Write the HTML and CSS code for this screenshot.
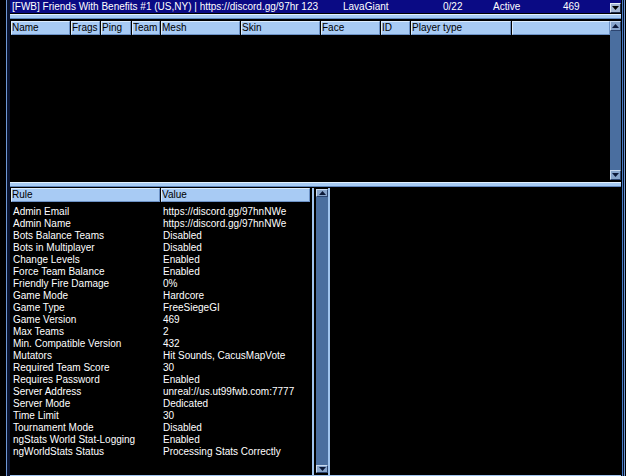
FILE: index.html
```html
<!DOCTYPE html>
<html>
<head>
<meta charset="utf-8">
<link rel="stylesheet" href="styles.css">
</head>
<body>
<div class="frame">
  <div class="edge-l"></div>
  <div class="main">
    <div class="srv">
      <div class="srv-cols">
        <span class="s-name">[FWB] Friends With Benefits #1 (US,NY) | https://discord.gg/97hr 123</span>
        <span class="s-map">LavaGiant</span>
        <span class="s-pl">0/22</span>
        <span class="s-st">Active</span>
        <span class="s-ver">469</span>
      </div>
      <div class="srv-sb">
        <div class="sbtn dark"><svg width="7" height="4" viewBox="0 0 7 4"><path d="M0 0H7L3.5 4Z" fill="#000"/></svg></div>
      </div>
    </div>
    <div class="split s1"></div>
    <div class="players">
      <div class="plist">
        <div class="hdr">
          <div class="hc w-name">Name</div>
          <div class="hc w-frags">Frags</div>
          <div class="hc w-ping">Ping</div>
          <div class="hc w-team">Team</div>
          <div class="hc w-mesh">Mesh</div>
          <div class="hc w-skin">Skin</div>
          <div class="hc w-face">Face</div>
          <div class="hc w-id">ID</div>
          <div class="hc w-ptype">Player type</div>
          <div class="hc w-rest"></div>
        </div>
      </div>
      <div class="vsb">
        <div class="sbtn"><svg width="7" height="4" viewBox="0 0 7 4"><path d="M0 4H7L3.5 0Z" fill="#0b1838"/></svg></div>
        <div class="track"></div>
        <div class="sbtn"><svg width="7" height="4" viewBox="0 0 7 4"><path d="M0 0H7L3.5 4Z" fill="#0b1838"/></svg></div>
      </div>
    </div>
    <div class="split s2"></div>
    <div class="lower">
      <div class="rules">
        <div class="rlist">
          <div class="hdr">
            <div class="hc w-rule">Rule</div>
            <div class="hc w-value">Value</div>
          </div>
          <div class="rows">
            <div class="row"><span class="k">Admin Email</span><span class="v">https://discord.gg/97hnNWe</span></div>
            <div class="row"><span class="k">Admin Name</span><span class="v">https://discord.gg/97hnNWe</span></div>
            <div class="row"><span class="k">Bots Balance Teams</span><span class="v">Disabled</span></div>
            <div class="row"><span class="k">Bots in Multiplayer</span><span class="v">Disabled</span></div>
            <div class="row"><span class="k">Change Levels</span><span class="v">Enabled</span></div>
            <div class="row"><span class="k">Force Team Balance</span><span class="v">Enabled</span></div>
            <div class="row"><span class="k">Friendly Fire Damage</span><span class="v">0%</span></div>
            <div class="row"><span class="k">Game Mode</span><span class="v">Hardcore</span></div>
            <div class="row"><span class="k">Game Type</span><span class="v">FreeSiegeGI</span></div>
            <div class="row"><span class="k">Game Version</span><span class="v">469</span></div>
            <div class="row"><span class="k">Max Teams</span><span class="v">2</span></div>
            <div class="row"><span class="k">Min. Compatible Version</span><span class="v">432</span></div>
            <div class="row"><span class="k">Mutators</span><span class="v">Hit Sounds, CacusMapVote</span></div>
            <div class="row"><span class="k">Required Team Score</span><span class="v">30</span></div>
            <div class="row"><span class="k">Requires Password</span><span class="v">Enabled</span></div>
            <div class="row"><span class="k">Server Address</span><span class="v">unreal://us.ut99fwb.com:7777</span></div>
            <div class="row"><span class="k">Server Mode</span><span class="v">Dedicated</span></div>
            <div class="row"><span class="k">Time Limit</span><span class="v">30</span></div>
            <div class="row"><span class="k">Tournament Mode</span><span class="v">Disabled</span></div>
            <div class="row"><span class="k">ngStats World Stat-Logging</span><span class="v">Enabled</span></div>
            <div class="row"><span class="k">ngWorldStats Status</span><span class="v">Processing Stats Correctly</span></div>
          </div>
        </div>
        <div class="vline"></div>
        <div class="vsb2">
          <div class="sbtn small"><svg width="7" height="4" viewBox="0 0 7 4"><path d="M0 4H7L3.5 0Z" fill="#0b1838"/></svg></div>
          <div class="track"></div>
          <div class="sbtn small"><svg width="7" height="4" viewBox="0 0 7 4"><path d="M0 0H7L3.5 4Z" fill="#0b1838"/></svg></div>
        </div>
        <div class="vline r"></div>
      </div>
      <div class="blank"></div>
    </div>
    <div class="bline"></div>
  </div>
  <div class="edge-r"></div>
</div>
</body>
</html>
```

FILE: styles.css
```css
* { box-sizing: border-box; }
html, body { margin: 0; padding: 0; background: #000; }
body {
  width: 626px;
  height: 476px;
  overflow: hidden;
  font-family: "Liberation Sans", Arial, sans-serif;
  font-size: 10px;
  color: #fff;
}
.frame { display: flex; height: 476px; }
.edge-l {
  width: 10px;
  background: linear-gradient(to right, #000 0 6px, #6f97d4 6px 7px, #0a1430 7px 10px);
}
.edge-r {
  width: 5px;
  background: linear-gradient(to right, #000 0 1px, #4a7cc8 1px 2px, #081020 2px 3px, #6b98d8 3px 4px, #000 4px);
}
.main { width: 611px; display: flex; flex-direction: column; }

/* server row */
.srv { height: 13px; display: flex; background: #0a0a84; }
.srv-cols { flex: 1; display: flex; line-height: 13px; white-space: nowrap; }
.srv-cols span { padding-left: 2px; overflow: hidden; }
.s-name { width: 331px; }
.s-map { width: 100px; }
.s-pl { width: 50px; }
.s-st { width: 70px; }
.s-ver { flex: 1; }
.srv-sb { width: 11px; padding-top: 3px; }

/* splitters */
.split {
  height: 5px;
  background: #a8ccf4;
  border-top: 1px solid #e2f1ff;
  border-bottom: 1px solid #5f86bd;
}
.s1 { margin-top: 1px; }
.s2 { margin-top: 2px; }

/* player list */
.players { margin-top: 2px; height: 159px; display: flex; }
.plist { width: 600px; }
.hdr { display: flex; height: 14px; }
.hc {
  margin-left: 1px;
  height: 14px;
  line-height: 12px;
  color: #000;
  background: #a8cbf4;
  border: 1px solid;
  border-color: #dcedff #6d92c6 #6d92c6 #dcedff;
  white-space: nowrap;
  overflow: hidden;
}
.w-name { width: 59px; }
.w-frags { width: 29px; }
.w-ping { width: 30px; }
.w-team { width: 28px; }
.w-mesh { width: 79px; }
.w-skin { width: 79px; }
.w-face { width: 59px; }
.w-id { width: 29px; }
.w-ptype { width: 100px; }
.w-rest { width: 98px; }

.vsb { width: 11px; display: flex; flex-direction: column; }
.sbtn {
  height: 10px;
  background: #87a4cb;
  border: 1px solid;
  border-color: #c9daf0 #2b4470 #2b4470 #c9daf0;
  display: flex;
  align-items: center;
  justify-content: center;
}
.sbtn svg { display: block; }
.sbtn.dark { background: #a3b6d2; border-color: #e4ecf6 #1c2a48 #1c2a48 #e4ecf6; }
.sbtn.small { height: 8px; }
.track { flex: 1; background: #4a6e9f; }

/* lower pane */
.lower { margin-top: 1px; height: 287px; display: flex; }
.rules { width: 320px; display: flex; }
.rlist { width: 300px; margin-right: 2px; }
.w-rule { width: 149px; }
.w-value { width: 149px; }
.rows { padding-top: 4px; }
.row { display: flex; height: 12px; line-height: 12px; white-space: nowrap; }
.row .k { width: 150px; padding-left: 3px; overflow: hidden; }
.row .v { padding-left: 3px; }
.vline { width: 2px; background: #a0c4ee; margin-right: 2px; }
.vline.r { margin-right: 0; }
.vsb2 {
  width: 12px;
  display: flex;
  flex-direction: column;
  padding: 1px 0 2px;
}
.blank { flex: 1; }
.bline { height: 1px; background: #a0c4f0; }
```
